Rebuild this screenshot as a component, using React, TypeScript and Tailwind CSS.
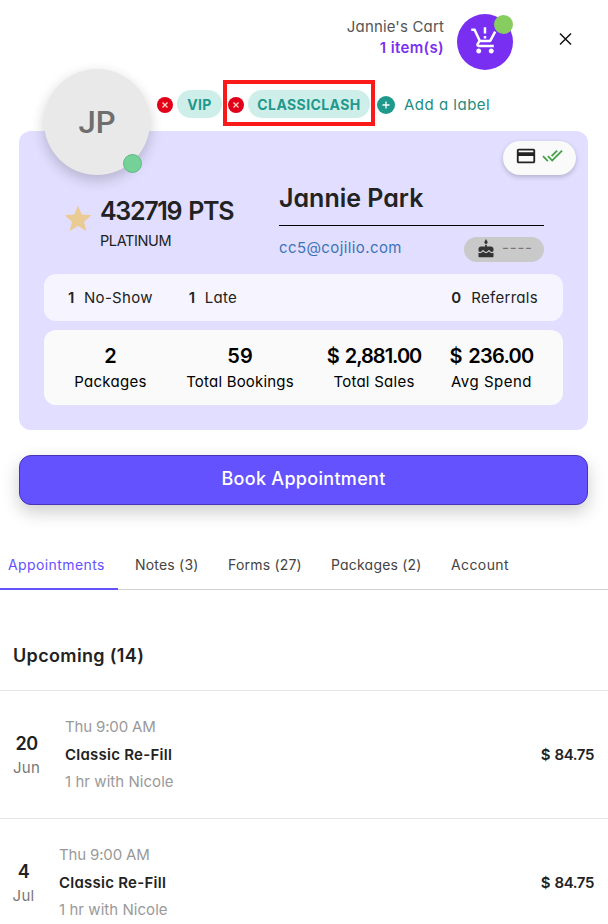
import type { ReactNode } from "react";
import clsx from "clsx";
import {
  MdCake,
  MdDoneAll,
  MdOutlineCreditCard,
  MdOutlineProductionQuantityLimits,
  MdStar,
} from "react-icons/md";

const STATS = [
  { value: "2", label: "Packages", valueClass: "", labelClass: "tracking-[0.3px]" },
  { value: "59", label: "Total Bookings", valueClass: "", labelClass: "tracking-[0.2px]" },
  { value: "$ 2,881.00", label: "Total Sales", valueClass: "tracking-[-1px] [word-spacing:2px]", labelClass: "tracking-[0.25px]" },
  { value: "$ 236.00", label: "Avg Spend", valueClass: "tracking-[-0.7px] [word-spacing:2px]", labelClass: "tracking-[0.5px]" },
];

const TABS = [
  { name: "Appointments", width: "w-[118px] pl-2 tracking-[0.4px]" },
  { name: "Notes (3)", width: "w-[93px] pl-[17px] tracking-[0.2px]" },
  { name: "Forms (27)", width: "w-[104px] pl-[17px] tracking-[0.2px]" },
  { name: "Packages (2)", width: "w-[120px] pl-4 tracking-[0.2px]" },
  { name: "Account", width: "w-[90px] pl-4 tracking-[0.4px]" },
];

const APPOINTMENTS = [
  { day: "20", month: "Jun", dateWidth: "w-[27px]", time: "Thu 9:00 AM", service: "Classic Re-Fill", detail: "1 hr with Nicole", price: "$ 84.75" },
  { day: "4", month: "Jul", dateWidth: "w-[21px]", time: "Thu 9:00 AM", service: "Classic Re-Fill", detail: "1 hr with Nicole", price: "$ 84.75" },
];

function RemoveButton() {
  return (
    <button className="mt-1 flex size-4 shrink-0 items-center justify-center rounded-full bg-[#e2001a]">
      <svg viewBox="0 0 16 16" className="size-4" stroke="#ffd9c0" strokeWidth="1.3">
        <path d="M5.5 5.5 10.5 10.5M10.5 5.5 5.5 10.5" />
      </svg>
    </button>
  );
}

function Label({ className, children }: { className?: string; children: ReactNode }) {
  return (
    <span className={clsx("mt-0.5 flex h-7 shrink-0 items-center justify-center rounded-full bg-[#ceeeea] pt-px text-[14px] font-bold tracking-[0.4px] text-[#1f998c]", className)}>
      {children}
    </span>
  );
}

function Count({ value, className, children }: { value: string; className: string; children: ReactNode }) {
  return (
    <div className="flex items-center pt-0.5 text-[15px] text-[#222]">
      <span className={clsx("font-semibold", className)}>{value}</span>
      <span className="tracking-[0.3px]">{children}</span>
    </div>
  );
}

export default function App() {
  return (
    <div className="h-[924px] w-[608px] overflow-hidden bg-white font-['Inter',sans-serif] whitespace-nowrap text-[#222] [font-feature-settings:'cv11']">
      {/* Cart */}
      <header className="flex h-[77px] items-start justify-end pr-[34px]">
        <div className="mt-4 mr-[13px] text-right text-[15px] leading-[21px]">
          <div className="tracking-[0.15px] text-[#555]">Jannie's Cart</div>
          <div className="font-semibold tracking-[0.35px] text-[#7b2ff2]">1 item(s)</div>
        </div>
        <div className="relative mt-3.5 flex size-14 items-center justify-center rounded-full bg-[#782ff2] text-white">
          <MdOutlineProductionQuantityLimits className="-mt-[3px] size-[30px]" />
          <span className="absolute top-px right-0 size-[19px] rounded-full bg-[#86cc5e]" />
        </div>
        <button className="mt-[31px] ml-[45px]">
          <svg viewBox="0 0 16 16" className="size-4" stroke="#111" strokeWidth="1.5">
            <path d="M2 2.5 13 13.5M13 2.5 2 13.5" />
          </svg>
        </button>
      </header>

      {/* Avatar and labels */}
      <div className="relative z-10 flex h-[54px] items-start pl-11">
        <div className="relative -mt-2 flex size-[106px] shrink-0 items-center justify-center rounded-full bg-[#e9e9e9] pt-0.5 font-['Roboto',sans-serif] text-[31px] font-medium text-[#6e6e6e] shadow-[0_5px_14px_rgba(0,0,0,0.2)]">
          JP
          <span className="absolute right-2 bottom-0.5 size-[19px] rounded-full border border-[#5fba85] bg-[#74d197]" />
        </div>
        <div className="mt-[3px] ml-[7px] flex h-[46px] items-center">
          <RemoveButton />
          <Label className="ml-1 w-[45px]">VIP</Label>
          <div className="ml-px flex h-[46px] w-[152px] items-center border-4 border-[#fb1a1a] pl-px">
            <RemoveButton />
            <Label className="ml-1 w-[122px]">CLASSICLASH</Label>
          </div>
          <button className="mt-[3px] ml-0.5 flex items-center">
            <svg viewBox="0 0 18 18" className="size-[18px]">
              <circle cx="9" cy="9" r="9" fill="#1f998c" />
              <path d="M9 5.5v7M5.5 9h7" stroke="#fff" strokeWidth="1.3" />
            </svg>
            <span className="ml-[9px] pt-px text-[15px] tracking-[0.5px] text-[#238c82]">Add a label</span>
          </button>
        </div>
      </div>

      {/* Client card */}
      <section className="relative mx-[19px] h-[299px] w-[569px] rounded-xl bg-[#e1deff] px-[25px]">
        <div className="absolute top-2.5 right-3 flex h-[34px] w-[73px] items-start gap-[5px] rounded-full bg-[#fafafa] pt-1 pl-3 shadow-[0_2px_5px_rgba(0,0,0,0.2)]">
          <MdOutlineCreditCard className="size-[22px] text-[#222]" />
          <MdDoneAll className="size-[21px] text-[#43a047]" />
        </div>
        <div className="flex h-[143px]">
          <div className="flex w-[235px] pt-[66px] pl-[18px]">
            <MdStar className="mt-1.5 size-8 shrink-0 text-[#e9cb93]" />
            <div className="ml-1.5">
              <div className="text-[25px] leading-[29px] font-semibold tracking-[-1.3px] [word-spacing:2px]">432719 PTS</div>
              <div className="mt-[3px] text-[14.5px] leading-[24px] tracking-[-0.4px]">PLATINUM</div>
            </div>
          </div>
          <div className="w-[265px] pt-[52px]">
            <div className="h-[43px] border-b border-black text-[25px] leading-[31px] font-semibold">Jannie Park</div>
            <div className="mt-[9px] flex items-start justify-between">
              <span className="text-[15px] leading-[26px] tracking-[0.4px] text-[#3d74b8]">cc5@cojilio.com</span>
              <span className="mt-0.5 flex h-[25px] w-20 items-center rounded-full bg-[#c9c9c9] pl-3 text-[#333]">
                <MdCake className="-mt-0.5 size-5" />
                <span className="ml-1.5 pb-0.5 text-[15px] tracking-[0.8px] text-[#777]">----</span>
              </span>
            </div>
          </div>
        </div>
        <div className="flex h-[47px] items-center rounded-xl bg-[#f6f5ff] pr-[25px] pl-6">
          <Count value="1" className="w-4">No-Show</Count>
          <div className="ml-9 grow">
            <Count value="1" className="w-4">Late</Count>
          </div>
          <Count value="0" className="w-5">Referrals</Count>
        </div>
        <div className="mt-[9px] grid h-[75px] grid-cols-[133px_126px_142px_93px] rounded-xl bg-[#fafafa] pt-3 text-center text-black">
          {STATS.map((stat) => (
            <div key={stat.label} className="flex flex-col items-center">
              <div className={clsx("text-[20px] leading-[28px] font-semibold", stat.valueClass)}>{stat.value}</div>
              <div className={clsx("text-[15px] leading-[24px]", stat.labelClass)}>{stat.label}</div>
            </div>
          ))}
        </div>
      </section>

      <button className="mx-[19px] mt-[25px] block h-[50px] w-[569px] rounded-xl border border-[#4535b5] bg-[#6552ff] pb-[3px] text-[18px] font-medium tracking-[0.3px] text-white shadow-[0_7px_18px_rgba(0,0,0,0.2)]">
        Book Appointment
      </button>

      <nav className="mt-9 flex h-[49px] border-b border-[#d0d0d0] text-[14px] text-[#444]">
        {TABS.map((tab, i) => (
          <div key={tab.name} className={clsx("h-[49px] shrink-0 pt-px leading-[46px]", tab.width, i === 0 && "border-b-2 border-[#6552ff] text-[#6552ff]")}>
            {tab.name}
          </div>
        ))}
      </nav>

      <h2 className="h-[100px] pl-[13px] text-[18px] leading-[131px] font-semibold tracking-[0.35px]">Upcoming (14)</h2>
      {APPOINTMENTS.map((item) => (
        <div key={item.day} className="flex h-32 border-t border-[#e5e5e5] pr-3.5 pl-[13px]">
          <div className={clsx("flex flex-col items-center pt-10", item.dateWidth)}>
            <div className="text-[18px] leading-[25px] font-semibold tracking-[-0.5px]">{item.day}</div>
            <div className="text-[15px] leading-6 tracking-[0.3px] text-[#777]">{item.month}</div>
          </div>
          <div className="ml-[25px] grow pt-[22px] text-[15px] leading-[27.5px] text-[#999]">
            <div className="tracking-[-0.15px]">{item.time}</div>
            <div className="font-semibold tracking-[0.25px] text-[#222]">{item.service}</div>
            <div className="tracking-[0.05px]">{item.detail}</div>
          </div>
          <div className="pt-[50px] text-[15px] leading-[27px] font-semibold tracking-[-0.4px] [word-spacing:1px]">{item.price}</div>
        </div>
      ))}
    </div>
  );
}
